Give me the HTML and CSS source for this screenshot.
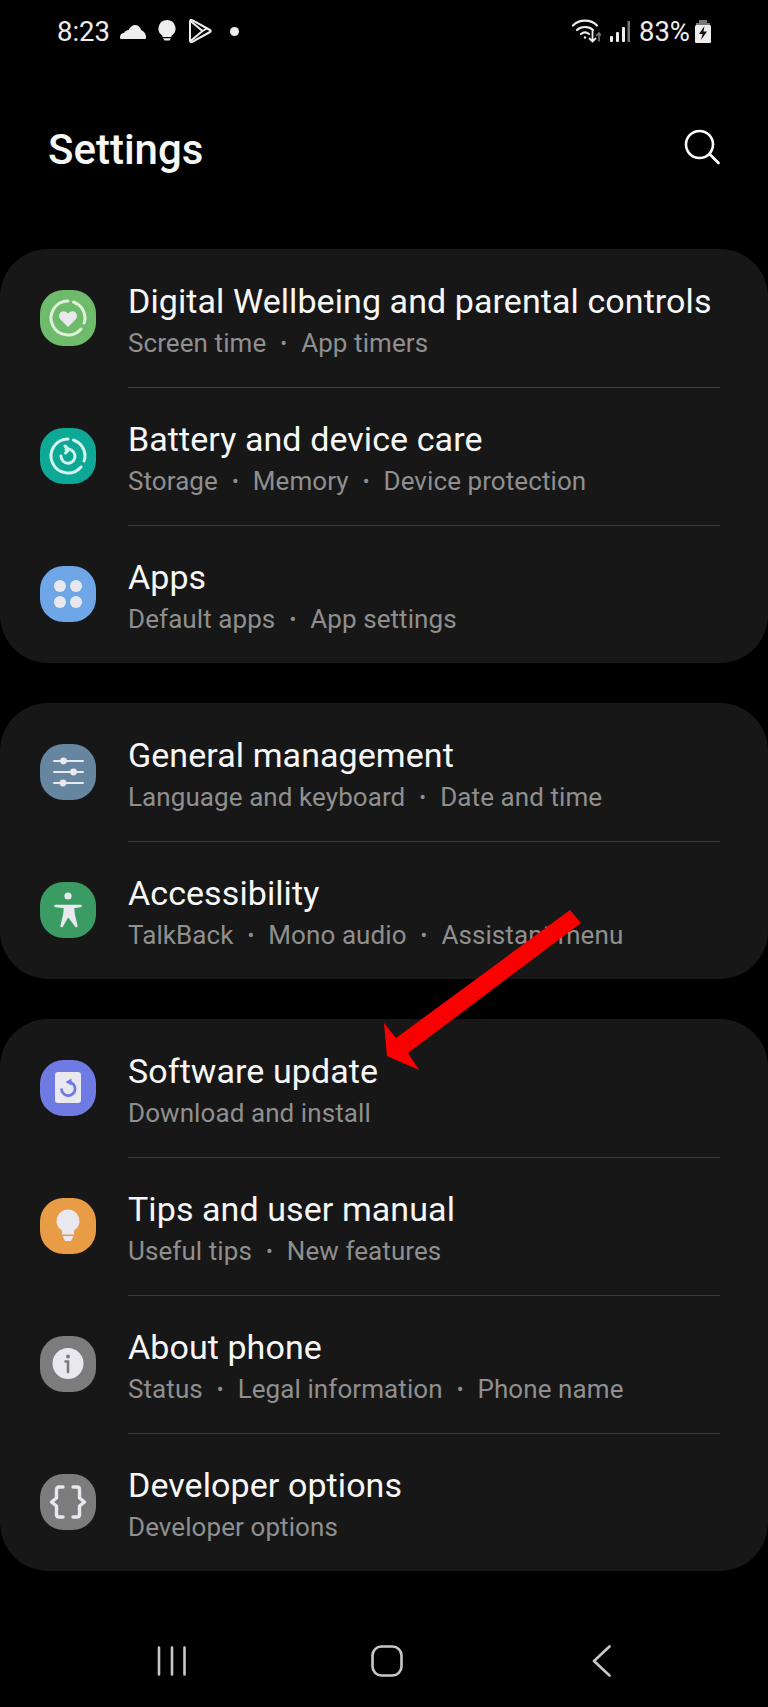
FILE: index.html
```html
<!DOCTYPE html>
<html lang="en">
<head>
    <meta charset="utf-8">
    <meta name="viewport" content="width=device-width, initial-scale=1">
    <title>Settings</title>
    <link rel="stylesheet" href="styles.css">
</head>
<body>

<div id="status-bar">
    <div class="status-left">
        <span class="status-time">8:23</span>
        <svg class="st-cloud" width="26" height="14" viewBox="0 0 26 14"><path fill="#eee" d="M1 14c-1 0-1-1-1-2 0-2 1.500-4 4-4 1-2 3-3 4.500-3C10 2 12.500 0 15 0c3 0 5.500 2 6 5 2.500 1 5 3.500 5 7 0 1 0 2-1 2z"/></svg>
        <svg class="st-bulb" width="18" height="22" viewBox="0 0 18 22"><path fill="#eee" d="M9 0a8.500 8.500 0 0 1 4.500 15.700V17h-9v-1.300A8.500 8.500 0 0 1 9 0z"/><path fill="#eee" d="M5 18.200h8L11.500 20.500h-5z"/></svg>
        <svg class="st-play" width="24" height="24" viewBox="0 0 24 24" fill="none" stroke="#eee" stroke-width="2" stroke-linejoin="round"><path d="M2 2.500c0-1.500 1-2 2.200-1.300L22 11c1 .6 1 1.500 0 2L4.200 22.800C3 23.500 2 23 2 21.500z"/><path d="M2.500 2l12 10-12 10M14.500 12l5-3"/></svg>
        <span class="st-dot"></span>
    </div>
    <div class="status-right">
        <svg width="29" height="24" viewBox="0 0 29 24" fill="none" stroke="#eee" stroke-width="2.200" stroke-linecap="round"><path d="M1 6.500C7 0 19 0 25 6.500"/><path d="M5 11c4-4 12-4 16 0"/><path d="M9 15c2.500-2 5.500-2 8 0"/><circle cx="13" cy="18.500" r="1.200" fill="#eee" stroke="none"/><path stroke-width="1.800" d="M20.500 12v10.500M17.500 19.500l3 3 3-3"/><path stroke="#777" stroke-width="1.600" d="M27 22v-8M24.500 16.500L27 14l2 2.500"/></svg>
        <svg class="st-signal" width="20" height="21" viewBox="0 0 20 21" fill="#eee"><rect x="0" y="15" width="3" height="6" rx="1"/><rect x="6" y="11" width="3" height="10" rx="1"/><rect x="12" y="6" width="3" height="15" rx="1"/><rect x="17.500" y="0" width="2.500" height="21" fill="#777"/></svg>
        <span class="status-batt">83%</span>
        <svg width="16" height="23" viewBox="0 0 16 23"><path fill="#777" d="M4 0h8v3h-8z"/><path fill="#777" d="M1 3h14v4H1z"/><rect x="0" y="5" width="16" height="18" rx="1.500" fill="#eee"/><path fill="#111" d="M9.500 6L4 14h3.500L6 20l6-8.500H8.500z"/></svg>
    </div>
</div>

<div id="title-bar">
    <h1>Settings</h1>
    <svg width="36" height="36" viewBox="0 0 36 36" fill="none" stroke="#fff" stroke-width="2.600" stroke-linecap="round"><circle cx="15.500" cy="15.500" r="13.500"/><path d="M25.500 25l9 9"/></svg>
</div>

<div class="card">
    <div class="row">
        <div class="icon c-green">
            <svg viewBox="0 0 56 56" fill="none" stroke="#dff0db" stroke-width="3" stroke-linecap="round"><path d="M28 11a17 17 0 1 0 13 28"/><path d="M33.500 12a17 17 0 0 1 11.500 16c0 2-.3 3.500-1 5"/><path fill="#e8e8ee" stroke="none" d="M28 37l-7.500-7.500c-2-2-2-5 0-7s5-1.500 7.500 1c2.500-2.500 5.500-3 7.500-1s2 5 0 7z"/></svg>
        </div>
        <div class="row-body">
            <div class="row-title">Digital Wellbeing and parental controls</div>
            <div class="row-sub">Screen time<i>•</i>App timers</div>
        </div>
    </div>
    <div class="row">
        <div class="icon c-teal">
            <svg viewBox="0 0 56 56" fill="none" stroke="#d5f2ec" stroke-width="3" stroke-linecap="round"><path d="M28 11a17 17 0 1 0 13 28"/><path d="M33.500 12a17 17 0 0 1 11.500 16c0 2-.3 3.500-1 5"/><path d="M21 28a7 7 0 1 0 5-6.500"/><path d="M25 18l4 3.500-3.500 3.500"/></svg>
        </div>
        <div class="row-body">
            <div class="row-title">Battery and device care</div>
            <div class="row-sub">Storage<i>•</i>Memory<i>•</i>Device protection</div>
        </div>
    </div>
    <div class="row">
        <div class="icon c-blue">
            <svg viewBox="0 0 56 56" fill="#e8e8ee"><circle cx="20" cy="20" r="6"/><circle cx="36" cy="20" r="6"/><circle cx="20" cy="36" r="6"/><circle cx="36" cy="36" r="6"/></svg>
        </div>
        <div class="row-body">
            <div class="row-title">Apps</div>
            <div class="row-sub">Default apps<i>•</i>App settings</div>
        </div>
    </div>
</div>

<div class="card">
    <div class="row">
        <div class="icon c-slate">
            <svg viewBox="0 0 56 56" stroke="#e8e8ee" stroke-width="2" stroke-linecap="round" fill="#e8e8ee"><path d="M14 17h29M14 28h29M14 39h29"/><circle cx="23.500" cy="17" r="3.400" stroke="none"/><circle cx="33.500" cy="28" r="3.400" stroke="none"/><circle cx="23" cy="39" r="3.400" stroke="none"/></svg>
        </div>
        <div class="row-body">
            <div class="row-title">General management</div>
            <div class="row-sub">Language and keyboard<i>•</i>Date and time</div>
        </div>
    </div>
    <div class="row">
        <div class="icon c-dgreen">
            <svg viewBox="0 0 56 56" fill="#e8e8ee"><circle cx="28" cy="14" r="3.600"/><path stroke="#e8e8ee" stroke-width="2.600" stroke-linecap="round" stroke-linejoin="round" d="M15.500 24h25l-7.500 1 .5 7 2.800 12L28 33l-6.300 11 2.800-12 .5-7z"/></svg>
        </div>
        <div class="row-body">
            <div class="row-title">Accessibility</div>
            <div class="row-sub">TalkBack<i>•</i>Mono audio<i>•</i>Assistant menu</div>
        </div>
    </div>
</div>

<div class="card">
    <div class="row">
        <div class="icon c-purple">
            <svg viewBox="0 0 56 56" fill="none"><rect x="15" y="12" width="26" height="31" rx="3" fill="#e8e8ee"/><path stroke="#6f7ae2" stroke-width="2.800" d="M29 22a6.800 6.800 0 1 1-7.500 6.500"/><path fill="#6f7ae2" d="M31.500 18.500v7l-6-3.500z"/></svg>
        </div>
        <div class="row-body">
            <div class="row-title">Software update</div>
            <div class="row-sub">Download and install</div>
        </div>
    </div>
    <div class="row">
        <div class="icon c-orange">
            <svg viewBox="0 0 56 56" fill="#e8e8ee"><path d="M28 11.500a11.500 11.500 0 0 1 6 21.300V36.500H22v-3.700a11.500 11.500 0 0 1 6-21.300z"/><path d="M22.500 38h11l-2.500 5h-6z"/></svg>
        </div>
        <div class="row-body">
            <div class="row-title">Tips and user manual</div>
            <div class="row-sub">Useful tips<i>•</i>New features</div>
        </div>
    </div>
    <div class="row">
        <div class="icon c-gray">
            <svg viewBox="0 0 56 56"><circle cx="28" cy="27.500" r="15.500" fill="#e8e8ee"/><circle cx="28" cy="20.500" r="1.900" fill="#7c7c7c"/><path stroke="#7c7c7c" stroke-width="2.600" stroke-linecap="round" fill="none" d="M25.500 25.500H28V36"/></svg>
        </div>
        <div class="row-body">
            <div class="row-title">About phone</div>
            <div class="row-sub">Status<i>•</i>Legal information<i>•</i>Phone name</div>
        </div>
    </div>
    <div class="row">
        <div class="icon c-gray">
            <svg viewBox="0 0 56 56" fill="none" stroke="#e8e8ee" stroke-width="3.400" stroke-linecap="round" stroke-linejoin="round"><path d="M23 13h-4c-1.500 0-2.500 1-2.500 2.500V24L11.500 28l5 4v8.500c0 1.500 1 2.500 2.500 2.500h4"/><path d="M33 13h4c1.500 0 2.500 1 2.500 2.500V24l5 4-5 4v8.500c0 1.500-1 2.500-2.500 2.500h-4"/></svg>
        </div>
        <div class="row-body">
            <div class="row-title">Developer options</div>
            <div class="row-sub">Developer options</div>
        </div>
    </div>
</div>

<div id="nav-bar">
    <svg width="30" height="30" viewBox="0 0 30 30" stroke="#c8c8c8" stroke-width="2.600" stroke-linecap="round"><path d="M2 1.500v27M15 1.500v27M27.500 1.500v27"/></svg>
    <svg width="32" height="32" viewBox="0 0 32 32" fill="none" stroke="#c8c8c8" stroke-width="2.600"><rect x="1.500" y="1.500" width="29" height="29" rx="9"/></svg>
    <svg width="20" height="32" viewBox="0 0 20 32" fill="none" stroke="#c8c8c8" stroke-width="2.600" stroke-linecap="round" stroke-linejoin="round"><path d="M17.500 1.500L2 16l15.500 14.500"/></svg>
</div>

<svg id="red-arrow" width="768" height="1707" viewBox="0 0 768 1707"><path fill="#fb0000" d="M570 910L581 923 408 1053 419 1070 387 1056 384 1023 396 1038z"/></svg>

</body>
</html>
```

FILE: styles.css
```css
body {
    margin: 0;
    height: 1707px;
    position: relative;
    overflow: hidden;
    background: #000;
    color: #f7f7f7;
    font-family: Roboto, "Liberation Sans", sans-serif;
}

#status-bar {
    height: 62px;
    padding: 0 57px 0 57px;
    display: flex;
    justify-content: space-between;
    align-items: center;
}

.status-left, .status-right {
    display: flex;
    align-items: center;
    color: #eee;
    font-size: 27.5px;
}

.status-left { gap: 12px; }
.status-right { gap: 9px; }

.status-time { margin-right: -2px; }
.status-batt { margin-right: -4px; }
.st-cloud { margin-top: 2px; }
.st-dot {
    width: 9px;
    height: 9px;
    margin-left: 6px;
    border-radius: 50%;
    background: #eee;
}

#title-bar {
    height: 187px;
    padding: 0 48px 0 48px;
    box-sizing: border-box;
    display: flex;
    justify-content: space-between;
    align-items: flex-start;
}

#title-bar h1 {
    margin: 0;
    padding-top: 64px;
    font-size: 42px;
    line-height: 48px;
    font-weight: 500;
}

#title-bar svg { margin-top: 67px; }

.card {
    margin-bottom: 40px;
    background: #171717;
    border-radius: 48px;
}

.row {
    height: 138px;
    padding-left: 40px;
    padding-right: 48px;
    display: flex;
    align-items: center;
    gap: 32px;
}

.icon {
    width: 56px;
    height: 56px;
    flex: none;
    border-radius: 42%;
}

.icon svg { display: block; }

.c-green { background: #6dbb6b; }
.c-teal { background: #0ea896; }
.c-blue { background: #6fa6e8; }
.c-slate { background: #66859e; }
.c-dgreen { background: #3a9c62; }
.c-purple { background: #6f7ae2; }
.c-orange { background: #e89c46; }
.c-gray { background: #7c7c7c; }

.row-body {
    flex: 1;
    height: 138px;
    box-sizing: border-box;
    padding-top: 32px;
}

.row + .row .row-body {
    padding-top: 31px;
    border-top: 1px solid #3c3c3c;
}

.row-title {
    font-size: 34px;
    line-height: 40px;
    letter-spacing: .08px;
    white-space: nowrap;
}

.row-sub {
    margin-top: 4px;
    font-size: 26px;
    line-height: 36px;
    letter-spacing: .08px;
    color: #8f8f8f;
    white-space: nowrap;
}

.row-sub i {
    margin: 0 14px;
    font-style: normal;
    font-size: 20px;
    vertical-align: 2px;
}

#nav-bar {
    position: absolute;
    left: 0;
    right: 0;
    top: 1645px;
    padding-left: 64px;
    display: grid;
    grid-template-columns: repeat(3, 215px);
    justify-items: center;
    align-items: center;
}

#red-arrow {
    position: absolute;
    left: 0;
    top: 0;
}
```
